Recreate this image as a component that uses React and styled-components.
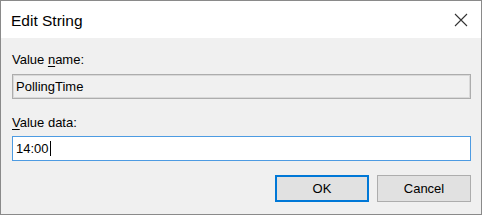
import React from 'react'
import styled, { createGlobalStyle } from 'styled-components'

const GlobalStyle = createGlobalStyle`
  html, body {
    margin: 0;
    padding: 0;
    background: #ffffff;
  }
  body {
    font-family: "Liberation Sans", Arial, sans-serif;
    color: #000;
  }
`

const Window = styled.div`
  width: 482px;
  height: 215px;
  box-sizing: border-box;
  border: 1px solid #8a8a8a;
  background: #f0f0f0;
  display: flex;
  flex-direction: column;
`

const TitleBar = styled.div`
  height: 37px;
  background: #ffffff;
  display: flex;
  align-items: center;
  justify-content: space-between;
  padding: 2px 0 0 10px;
  box-sizing: border-box;
`

const Title = styled.div`
  font-size: 15.5px;
  color: #000;
`

const CloseButton = styled.div`
  width: 40px;
  height: 35px;
  display: flex;
  align-items: center;
  justify-content: center;
  margin-top: -2px;
`

const Body = styled.div`
  flex: 1;
  padding: 14px 10px 0 11px;
  display: flex;
  flex-direction: column;
`

const Label = styled.div`
  font-size: 13px;
  line-height: 15px;
  color: #000;
  margin-bottom: ${p => p.$gap || 7}px;
  u {
    text-decoration-thickness: 1px;
    text-underline-offset: 2px;
  }
`

const Field = styled.div`
  height: 25px;
  box-sizing: border-box;
  display: flex;
  align-items: center;
  padding-left: 3px;
  font-size: 13px;
  background: ${p => (p.$readOnly ? '#f0f0f0' : '#ffffff')};
  border: 1px solid ${p => (p.$focused ? '#4d9be2' : '#adadad')};
  box-shadow: ${p => (p.$readOnly ? 'inset 0 0 0 1px #d9d9d9' : 'none')};
  margin-bottom: ${p => p.$gap || 0}px;
`

const Caret = styled.span`
  display: inline-block;
  width: 1px;
  height: 15px;
  background: #000;
  margin-left: 1px;
`

const Buttons = styled.div`
  display: flex;
  justify-content: flex-end;
  gap: 8px;
`

const Button = styled.div`
  width: 94px;
  height: 27px;
  box-sizing: border-box;
  background: #e1e1e1;
  border: ${p => (p.$default ? '2px solid #0078d7' : '1px solid #adadad')};
  display: flex;
  align-items: center;
  justify-content: center;
  font-size: 13px;
  color: #000;
`

export default function App() {
  return (
    <>
      <GlobalStyle />
      <Window>
        <TitleBar>
          <Title>Edit String</Title>
          <CloseButton>
            <svg width="14" height="14" viewBox="0 0 14 14">
              <path d="M1 1 L13 13 M13 1 L1 13" stroke="#333" strokeWidth="1.1" fill="none" />
            </svg>
          </CloseButton>
        </TitleBar>
        <Body>
          <Label>Value <u>n</u>ame:</Label>
          <Field $readOnly $gap={16}>PollingTime</Field>
          <Label $gap={6}><u>V</u>alue data:</Label>
          <Field $focused $gap={14}>14:00<Caret /></Field>
          <Buttons>
            <Button $default>OK</Button>
            <Button>Cancel</Button>
          </Buttons>
        </Body>
      </Window>
    </>
  )
}
